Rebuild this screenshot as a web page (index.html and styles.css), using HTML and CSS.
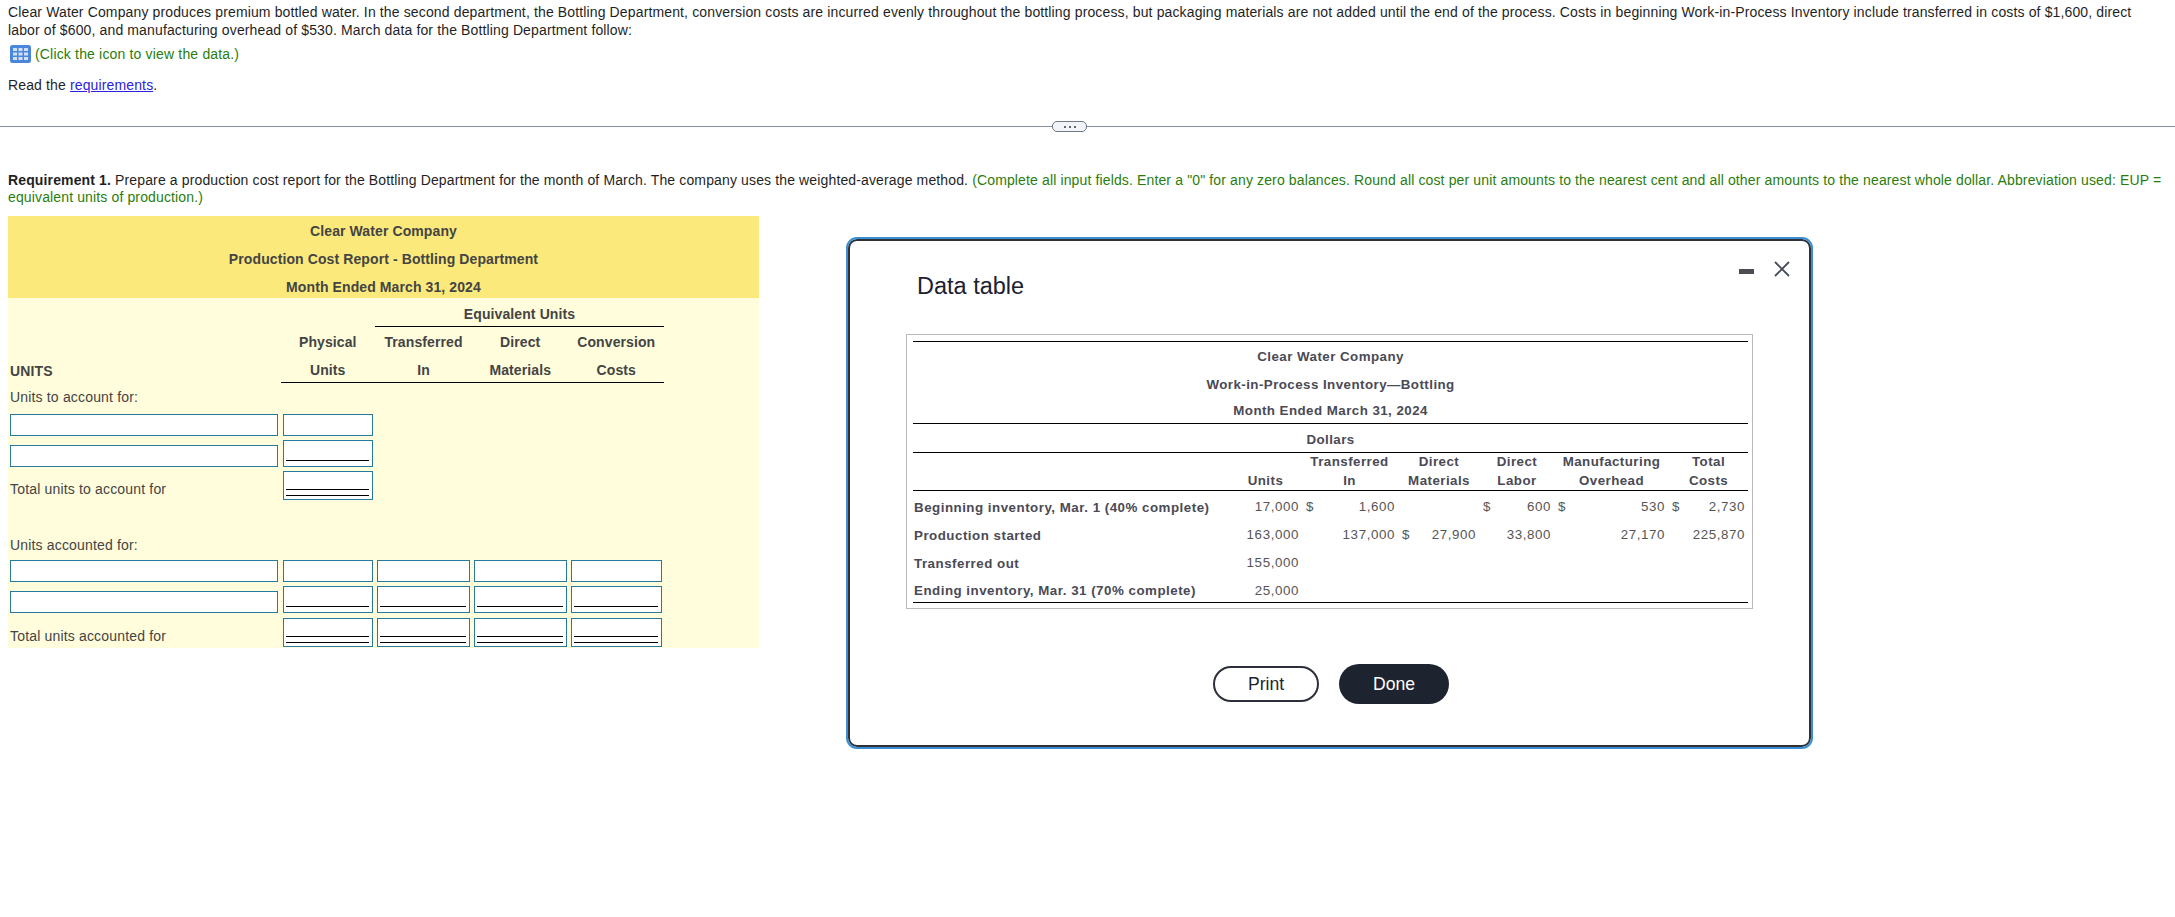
FILE: index.html
```html
<!DOCTYPE html>
<html lang="en">
<head>
<meta charset="utf-8">
<title>Production Cost Report</title>
<link rel="stylesheet" href="styles.css">
</head>
<body>
<section class="top">
  <p class="intro">Clear Water Company produces premium bottled water. In the second department, the Bottling Department, conversion costs are incurred evenly throughout the bottling process, but packaging materials are not added until the end of the process. Costs in beginning Work-in-Process Inventory include transferred in costs of $1,600, direct labor of $600, and manufacturing overhead of $530. March data for the Bottling Department follow:</p>
  <p class="data-link">
    <svg class="grid-icon" width="21" height="18" viewBox="0 0 21 18"><rect width="21" height="18" rx="2.5" fill="#4a86d9"/><g fill="#cfe0f7"><rect x="3" y="3" width="4" height="3"/><rect x="8.5" y="3" width="4" height="3"/><rect x="14" y="3" width="4" height="3"/><rect x="3" y="7.5" width="4" height="3"/><rect x="8.5" y="7.5" width="4" height="3"/><rect x="14" y="7.5" width="4" height="3"/><rect x="3" y="12" width="4" height="3"/><rect x="8.5" y="12" width="4" height="3"/><rect x="14" y="12" width="4" height="3"/></g></svg>
    <span class="green">(Click the icon to view the data.)</span>
  </p>
  <p class="read">Read the <a href="#">requirements</a>.</p>
</section>

<div class="divider">
  <span class="handle"><i></i><i></i><i></i></span>
</div>

<p class="req"><b>Requirement 1.</b> Prepare a production cost report for the Bottling Department for the month of March. The company uses the weighted-average method. <span class="green">(Complete all input fields. Enter a "0" for any zero balances. Round all cost per unit amounts to the nearest cent and all other amounts to the nearest whole dollar. Abbreviation used: EUP = equivalent units of production.)</span></p>

<section class="report">
  <header class="report-head">
    <div>Clear Water Company</div>
    <div>Production Cost Report - Bottling Department</div>
    <div>Month Ended March 31, 2024</div>
  </header>
  <div class="report-grid">
    <div class="blank-2"></div>
    <div class="eq">Equivalent Units</div>

    <div class="blank"></div>
    <div class="hd">Physical</div>
    <div class="hd">Transferred</div>
    <div class="hd">Direct</div>
    <div class="hd">Conversion</div>

    <div class="units-title">UNITS</div>
    <div class="hd rule">Units</div>
    <div class="hd rule">In</div>
    <div class="hd rule">Materials</div>
    <div class="hd rule">Costs</div>

    <div class="lbl full">Units to account for:</div>

    <div class="cell name-cell"><span class="field"></span></div>
    <div class="cell"><span class="field"></span></div>
    <div class="fill"></div>

    <div class="cell name-cell"><span class="field"></span></div>
    <div class="cell"><span class="field single"></span></div>
    <div class="fill"></div>

    <div class="lbl total">Total units to account for</div>
    <div class="cell"><span class="field double"></span></div>
    <div class="fill"></div>

    <div class="full"></div>

    <div class="lbl full">Units accounted for:</div>

    <div class="cell name-cell"><span class="field"></span></div>
    <div class="cell"><span class="field"></span></div>
    <div class="cell"><span class="field"></span></div>
    <div class="cell"><span class="field"></span></div>
    <div class="cell"><span class="field"></span></div>

    <div class="cell name-cell"><span class="field"></span></div>
    <div class="cell"><span class="field single"></span></div>
    <div class="cell"><span class="field single"></span></div>
    <div class="cell"><span class="field single"></span></div>
    <div class="cell"><span class="field single"></span></div>

    <div class="lbl total">Total units accounted for</div>
    <div class="cell"><span class="field double"></span></div>
    <div class="cell"><span class="field double"></span></div>
    <div class="cell"><span class="field double"></span></div>
    <div class="cell"><span class="field double"></span></div>
  </div>
</section>

<div class="modal">
  <div class="modal-controls">
    <span class="minimize"></span>
    <svg class="close" width="16" height="16" viewBox="0 0 16 16"><path d="M1 1 L15 15 M15 1 L1 15" stroke="#454c56" stroke-width="1.8" fill="none"/></svg>
  </div>
  <h2 class="modal-title">Data table</h2>
  <div class="data-box">
    <table class="data">
      <colgroup>
        <col class="c-label"><col class="c-units"><col class="c-dl"><col class="c-v1"><col class="c-dl"><col class="c-v2"><col class="c-dl"><col class="c-v3"><col class="c-dl"><col class="c-v4"><col class="c-dl"><col class="c-v5">
      </colgroup>
      <tbody>
        <tr class="t1"><th colspan="12">Clear Water Company</th></tr>
        <tr class="t2"><th colspan="12">Work-in-Process Inventory—Bottling</th></tr>
        <tr class="t3"><th colspan="12">Month Ended March 31, 2024</th></tr>
        <tr class="t4"><th colspan="12">Dollars</th></tr>
        <tr class="h1">
          <th></th><th class="pr5"></th>
          <th colspan="2" class="pr7">Transferred</th>
          <th colspan="2" class="pr7">Direct</th>
          <th colspan="2" class="pr7">Direct</th>
          <th colspan="2" class="pr7">Manufacturing</th>
          <th colspan="2" class="pr3">Total</th>
        </tr>
        <tr class="h2">
          <th></th><th class="pr5">Units</th>
          <th colspan="2" class="pr7">In</th>
          <th colspan="2" class="pr7">Materials</th>
          <th colspan="2" class="pr7">Labor</th>
          <th colspan="2" class="pr7">Overhead</th>
          <th colspan="2" class="pr3">Costs</th>
        </tr>
        <tr class="r">
          <td class="name">Beginning inventory, Mar. 1 (40% complete)</td><td class="num pr5">17,000</td>
          <td class="dl first">$</td><td class="num pr7">1,600</td>
          <td class="dl"></td><td class="num pr7"></td>
          <td class="dl">$</td><td class="num pr7">600</td>
          <td class="dl">$</td><td class="num pr7">530</td>
          <td class="dl">$</td><td class="num pr3">2,730</td>
        </tr>
        <tr class="r">
          <td class="name">Production started</td><td class="num pr5">163,000</td>
          <td class="dl"></td><td class="num pr7">137,000</td>
          <td class="dl">$</td><td class="num pr7">27,900</td>
          <td class="dl"></td><td class="num pr7">33,800</td>
          <td class="dl"></td><td class="num pr7">27,170</td>
          <td class="dl"></td><td class="num pr3">225,870</td>
        </tr>
        <tr class="r">
          <td class="name">Transferred out</td><td class="num pr5">155,000</td>
          <td colspan="10"></td>
        </tr>
        <tr class="r last">
          <td class="name">Ending inventory, Mar. 31 (70% complete)</td><td class="num pr5">25,000</td>
          <td colspan="10"></td>
        </tr>
      </tbody>
    </table>
  </div>
  <div class="modal-actions">
    <button class="btn btn-print" type="button">Print</button>
    <button class="btn btn-done" type="button">Done</button>
  </div>
</div>
</body>
</html>
```
FILE: styles.css
```css
* { box-sizing: border-box; }
html, body { margin: 0; padding: 0; background: #fff; }
body {
  font-family: "Liberation Sans", Arial, sans-serif;
  font-size: 14px;
  letter-spacing: 0.135px;
  line-height: 18px;
  color: #1f1f1f;
  width: 2175px;
  height: 917px;
  overflow: hidden;
  position: relative;
}
p { margin: 0; }
.top { padding: 3px 8px 0; }
.intro { width: 2140px; }
.green { color: #2a7d0c; }
.data-link { display: flex; align-items: center; gap: 4px; margin-top: 5px; padding-left: 2px; height: 19px; }
.data-link .green { letter-spacing: 0.17px; }
.grid-icon { display: block; flex: none; }
.read { margin-top: 13px; }
.read a { color: #2b22e0; }

.divider { position: relative; height: 1px; background: #8a90a6; margin-top: 32px; }
.handle {
  position: absolute; left: 1052px; top: -5px;
  width: 35px; height: 11px;
  display: flex; align-items: center; justify-content: center; gap: 3px;
  background: #f3f4f8; border: 1px solid #6b7888; border-radius: 5px;
}
.handle i { width: 2px; height: 2px; background: #5d6675; display: block; }

.req { margin-top: 45px; padding: 0 8px; line-height: 17px; }

.report { margin: 10px 0 0 8px; width: 751px; color: #444; background: #fffddc; height: 432px; letter-spacing: 0.17px; }
.report-head { background: #fbea7b; height: 82px; padding-top: 1px; text-align: center; font-weight: bold; line-height: 28px; letter-spacing: 0.1px; }
.report-grid {
  display: grid;
  padding-left: 2px;
  grid-template-columns: 270.5px 94.5px 97px 96.5px 95.5px;
  grid-template-rows: 29px 28px 28px 30px 24px 31px 33px 30px 28px 24px 31px 34px;
  width: 656px;
}
.blank-2 { grid-column: 1 / 3; }
.eq { grid-column: 3 / 6; font-weight: bold; text-align: center; border-bottom: 1px solid #000; padding-top: 7px; letter-spacing: 0.1px; }
.hd { font-weight: bold; text-align: center; padding-top: 6px; letter-spacing: 0.1px; }
.rule { border-bottom: 1px solid #000; }
.units-title { font-weight: bold; padding-top: 7px; }
.lbl { padding-top: 5px; }
.full { grid-column: 1 / -1; }
.fill { grid-column: 3 / 6; }
.total { align-self: end; padding: 0 0 3px; }
.cell { padding: 0 2px 1px; display: flex; align-items: flex-end; }
.name-cell { padding-left: 0; padding-right: 2.5px; }
.field { display: block; position: relative; flex: 1; height: 22px; background: #fff; border: 1px solid #26799f; }
.name-cell .field { height: 22px; }
.single { height: 27px; }
.double { height: 29px; }
.single::after, .double::after {
  content: ""; position: absolute; left: 2px; right: 3px; bottom: 5px;
  border-bottom: 1px solid #000;
}
.double::after { bottom: 3px; height: 5px; border-top: 1px solid #000; }

.modal {
  position: absolute; left: 848px; top: 239px; width: 963px; height: 508px;
  background: #fff; border: 2px solid #2f3136; border-radius: 9px;
  outline: 2px solid #3a8fd4;
  padding: 0 0 0 56px;
  letter-spacing: 0;
  font-size: 13.33px;
}
.modal-controls { position: absolute; top: 20px; right: 19px; display: flex; align-items: center; gap: 20px; }
.minimize { display: block; width: 15px; height: 5px; background: #4c4c52; margin-top: 4px; }
.close { display: block; }
.modal-title { margin: 0 0 0 11px; font-size: 23.5px; font-weight: normal; line-height: 28px; padding-top: 31px; height: 93px; color: #1c2130; }
.data-box { width: 847px; height: 275px; border: 1px solid #bbb; padding: 6px 5px 0 6px; }
.data { width: 835px; table-layout: fixed; border-collapse: collapse; color: #555; }
.data th { font-weight: bold; padding: 0; text-align: center; color: #4a4a55; letter-spacing: 0.45px; }
.data td { padding: 0; }
.c-label { width: 319px; } .c-units { width: 72px; } .c-dl { width: 16px; }
.c-v1 { width: 82px; } .c-v2 { width: 65px; } .c-v3 { width: 59px; } .c-v4 { width: 98px; } .c-v5 { width: 60px; }
.t1 th { border-top: 1px solid #000; height: 28px; padding-top: 3px; }
.t2 th { height: 28px; padding-top: 2px; }
.t3 th { height: 26px; border-bottom: 1px solid #000; padding-top: 2px; }
.t4 th { height: 29px; border-bottom: 1px solid #000; padding-top: 4px; }
.h1 th { height: 19px; line-height: 18px; }
.h2 th { height: 19px; line-height: 18px; border-bottom: 1px solid #000; }
.data .pr5 { padding-right: 5px; }
.data .pr7 { padding-right: 7px; }
.data .pr3 { padding-right: 3px; }
.r td { height: 28px; padding-top: 5px; }
.data .num { text-align: right; letter-spacing: 0.6px; }
.dl { text-align: left; }
.data .first { padding-left: 2px; }
.data .name { font-weight: bold; color: #4a4a55; padding: 6px 0 0 1px; letter-spacing: 0.5px; }
.last td { border-bottom: 1px solid #000; }
.modal-actions { display: flex; align-items: center; gap: 20px; margin-top: 55px; margin-left: 307px; height: 40px; }
.btn { font-family: "Liberation Sans", Arial, sans-serif; font-size: 17.6px; border-radius: 20px; padding: 0; cursor: pointer; }
.btn-print { width: 106px; height: 36px; background: #fff; color: #1e2330; border: 2px solid #2a2f3a; }
.btn-done { width: 110px; height: 40px; background: #1e2330; color: #fff; border: 0; }
```
